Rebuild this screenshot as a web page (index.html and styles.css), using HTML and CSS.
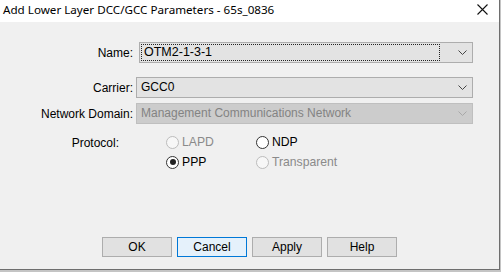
FILE: index.html
```html
<!DOCTYPE html>
<html>
<head>
<meta charset="utf-8">
<link rel="stylesheet" href="styles.css">
</head>
<body>
<div class="window">
  <div class="titlebar">
    <span class="title">Add Lower Layer DCC/GCC Parameters - 65s_0836</span>
    <svg class="close" width="11" height="11" viewBox="0 0 11 11"><path d="M0.5 0.5 L10.5 10.5 M10.5 0.5 L0.5 10.5" stroke="#111" stroke-width="1.1" fill="none"/></svg>
  </div>
  <div class="content">
    <div class="form">
      <div class="row row-name">
        <span class="lbl">Name:</span>
        <div class="combo combo-name">
          <span class="value focus">OTM2-1-3-1</span>
          <svg class="chev" width="9" height="5" viewBox="0 0 9 5"><path d="M0.5 0.5 L4.5 4.5 L8.5 0.5" stroke="#444" fill="none"/></svg>
        </div>
      </div>
      <div class="row row-carrier">
        <span class="lbl">Carrier:</span>
        <div class="combo">
          <span class="value">GCC0</span>
          <svg class="chev" width="9" height="5" viewBox="0 0 9 5"><path d="M0.5 0.5 L4.5 4.5 L8.5 0.5" stroke="#444" fill="none"/></svg>
        </div>
      </div>
      <div class="row row-net">
        <span class="lbl">Network Domain:</span>
        <div class="combo disabled">
          <span class="value">Management Communications Network</span>
          <svg class="chev" width="9" height="5" viewBox="0 0 9 5"><path d="M0.5 0.5 L4.5 4.5 L8.5 0.5" stroke="#a8a8a8" fill="none"/></svg>
        </div>
      </div>
      <div class="row row-proto">
        <span class="lbl lbl-proto">Protocol:</span>
        <div class="radios">
          <div class="radio off"><span class="dot"></span><span>LAPD</span></div>
          <div class="radio"><span class="dot"></span><span>NDP</span></div>
          <div class="radio checked"><span class="dot"></span><span>PPP</span></div>
          <div class="radio off"><span class="dot"></span><span>Transparent</span></div>
        </div>
      </div>
    </div>
    <div class="buttons">
      <button class="btn">OK</button>
      <button class="btn default">Cancel</button>
      <button class="btn">Apply</button>
      <button class="btn">Help</button>
    </div>
  </div>
</div>
</body>
</html>
```

FILE: styles.css
```css
html, body {
  margin: 0;
  padding: 0;
  background: #c4c4c4;
}
body {
  width: 501px;
  height: 272px;
  overflow: hidden;
}
.window {
  width: 499px;
  height: 269px;
  border-right: 1px solid #6e6e6e;
  border-bottom: 1px solid #6e6e6e;
  background: #f0f0f0;
  font-family: "Liberation Sans", Arial, sans-serif;
  font-size: 12px;
  color: #000;
}
.titlebar {
  height: 22px;
  background: #ffffff;
  display: flex;
  align-items: center;
  padding-left: 3px;
}
.title {
  font-family: "Noto Sans", "Open Sans", sans-serif;
  font-size: 11.65px;
  color: #000;
  flex: 1;
  line-height: 22px;
  margin-top: -3px;
}
.close {
  margin-right: 11px;
  margin-top: -3px;
}
.content {
  height: 247px;
  padding-top: 20px;
  box-sizing: border-box;
}
.row {
  display: grid;
  grid-template-columns: 133px 337px;
  column-gap: 3px;
  align-items: center;
}
.lbl {
  text-align: right;
  line-height: 16px;
}
.row-carrier { margin-top: 14px; }
.row-net { margin-top: 5px; }
.row-proto {
  margin-top: 8px;
  align-items: start;
}
.lbl-proto {
  padding-right: 14px;
  margin-top: 3px;
}
.combo {
  height: 21px;
  box-sizing: border-box;
  border: 1px solid #adadad;
  background: #e3e3e3;
  display: flex;
  align-items: center;
}
.combo-name {
  margin-left: 3px;
}
.combo .value {
  flex: 1;
  padding-left: 4px;
  line-height: 15px;
}
.combo-name .value {
  margin-left: 1px;
  margin-right: 18px;
  padding-left: 2px;
  height: 15px;
  border: 1px dotted #222;
  font-size: 12.5px;
}
.chev {
  margin-right: 5px;
}
.combo.disabled {
  background: #cccccc;
  border-color: #bfbfbf;
  color: #838383;
}
.radios {
  display: grid;
  grid-template-columns: 90px 120px;
  grid-auto-rows: 20px;
  padding-left: 30px;
}
.radio {
  display: flex;
  align-items: center;
  gap: 3px;
  font-size: 12.2px;
}
.radio .dot {
  width: 13px;
  height: 13px;
  box-sizing: border-box;
  border-radius: 50%;
  border: 1px solid #333;
  background: #fff;
  position: relative;
}
.radio.off {
  color: #8a8a8a;
}
.radio.off .dot {
  border-color: #bcbcbc;
  background: #f7f7f7;
}
.radio.checked .dot::after {
  content: "";
  position: absolute;
  left: 2.5px;
  top: 2.5px;
  width: 6px;
  height: 6px;
  border-radius: 50%;
  background: #222;
}
.buttons {
  display: flex;
  gap: 5px;
  padding-left: 102px;
  margin-top: 65px;
}
.btn {
  width: 70px;
  height: 20px;
  box-sizing: border-box;
  border: 1px solid #adadad;
  background: #e1e1e1;
  font-family: "Liberation Sans", Arial, sans-serif;
  font-size: 12px;
  color: #000;
  padding: 0;
  line-height: 18px;
}
.btn.default {
  border-color: #0078d7;
  background: #e5f1fb;
}
```
